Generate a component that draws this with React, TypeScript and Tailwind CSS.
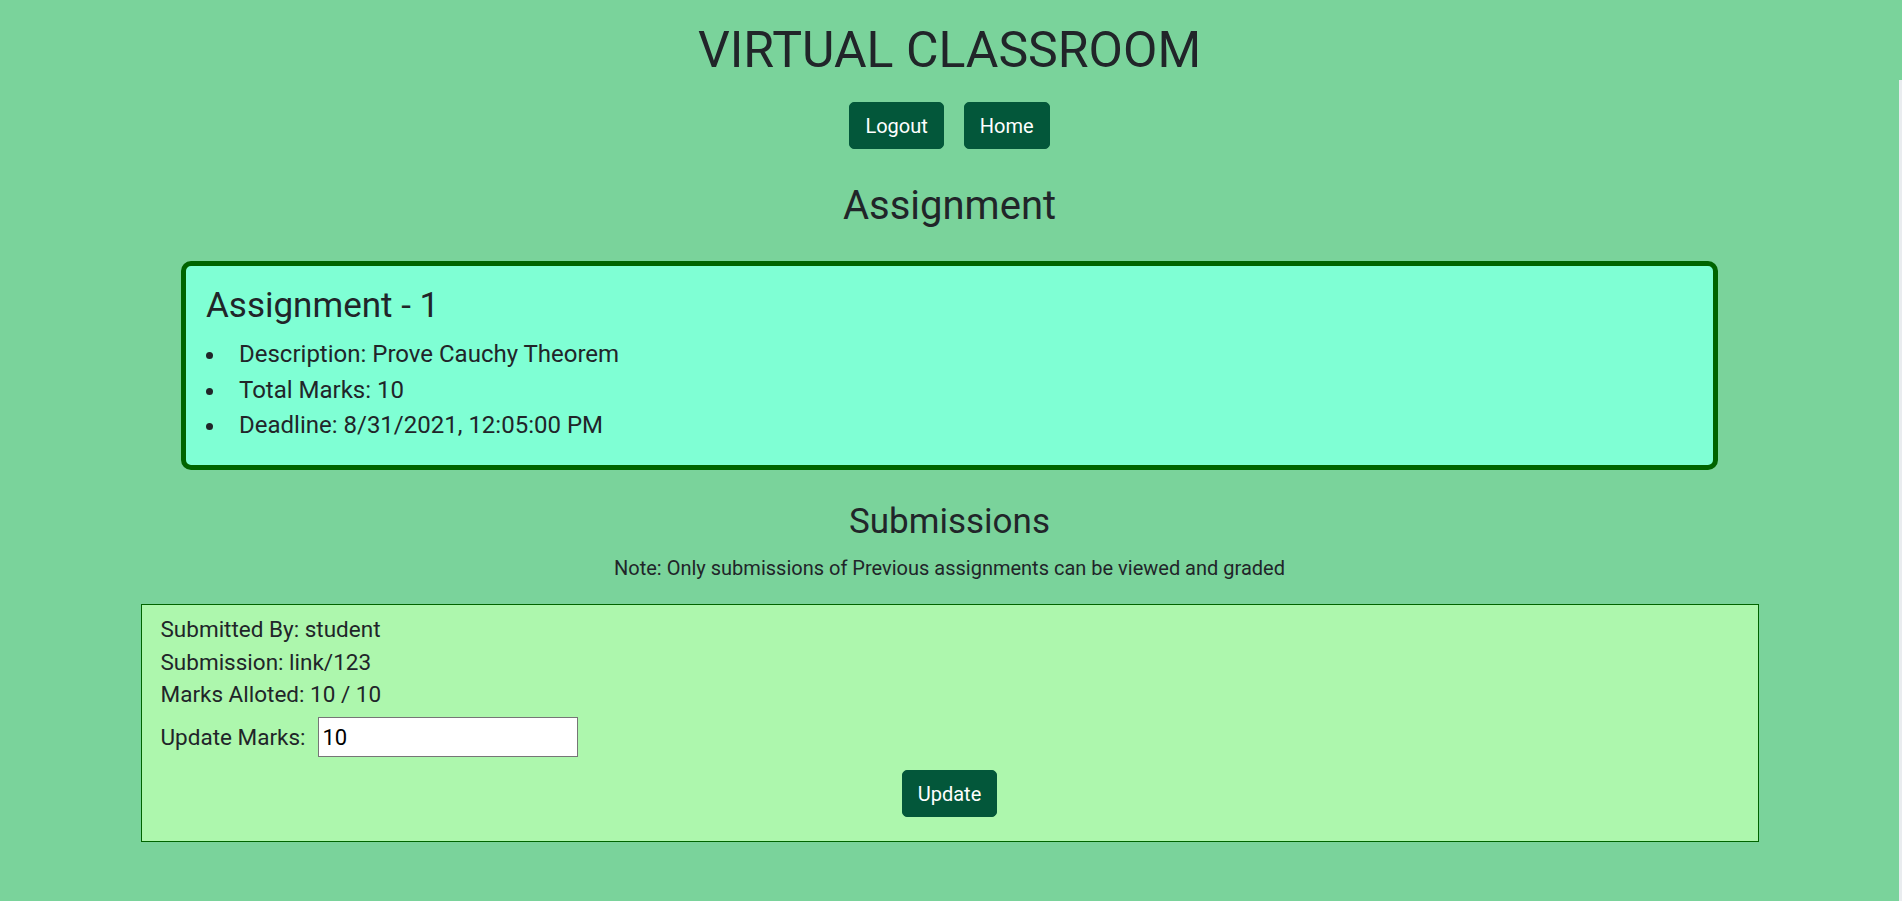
import { useState } from 'react';

const font = { fontFamily: 'Roboto, "Noto Sans", sans-serif' };

function Btn({ children }: { children: React.ReactNode }) {
  return (
    <button className="h-[47px] px-[15px] rounded-[5px] border border-[#03573a] bg-[#03573a] text-white text-[20px] leading-[30px]">
      {children}
    </button>
  );
}

function Item({ children }: { children: React.ReactNode }) {
  return (
    <li className="flex items-center">
      <span className="w-[7px] h-[7px] mt-[2px] rounded-full bg-[#212529] mr-[26px]" />
      <span>{children}</span>
    </li>
  );
}

export default function App() {
  const [marks, setMarks] = useState('10');

  return (
    <div className="flex min-h-[901px] bg-[#7ad39b] text-[#212529]" style={font}>
      <div className="flex-1 flex flex-col items-center pt-[20px]">
        <h1 className="text-[50px] leading-[60px] font-normal">VIRTUAL CLASSROOM</h1>

        <div className="flex gap-[20px] mt-[22px]">
          <Btn>Logout</Btn>
          <Btn>Home</Btn>
        </div>

        <h2 className="mt-[33px] text-[40px] leading-[48px] font-normal">Assignment</h2>

        <div className="mt-[31px] w-[1537px] h-[209px] rounded-[10px] border-[5px] border-[#006400] bg-[#7fffd4] px-[20px] pt-[19px]">
          <h3 className="text-[35px] leading-[42px] font-normal mb-[10px]">Assignment - 1</h3>
          <ul className="text-[24px] leading-[35.5px]">
            <Item>Description: Prove Cauchy Theorem</Item>
            <Item>Total Marks: 10</Item>
            <Item>Deadline: 8/31/2021, 12:05:00 PM</Item>
          </ul>
        </div>

        <h3 className="mt-[31px] text-[35px] leading-[42px] font-normal">Submissions</h3>
        <p className="mt-[10px] text-[20px] leading-[30px]">
          Note: Only submissions of Previous assignments can be viewed and graded
        </p>

        <div className="mt-[21px] w-[1618px] h-[238px] border border-[#006400] bg-[#adf7ad] px-[19px] pt-[8px] text-[22.5px] leading-[32.7px]">
          <div>Submitted By: student</div>
          <div>Submission: link/123</div>
          <div>Marks Alloted: 10 / 10</div>
          <div className="flex items-center gap-[12px] mt-[6px]">
            <span>Update Marks:</span>
            <input
              value={marks}
              onChange={(e) => setMarks(e.target.value)}
              className="w-[260px] h-[40px] border border-[#767676] bg-white px-[4px] text-[22px] text-black outline-none"
            />
          </div>
          <div className="flex justify-center mt-[13px]">
            <Btn>Update</Btn>
          </div>
        </div>
      </div>
      <div className="w-[3px] pt-[80px]">
        <div className="h-full bg-[#e9ecef]" />
      </div>
    </div>
  );
}
